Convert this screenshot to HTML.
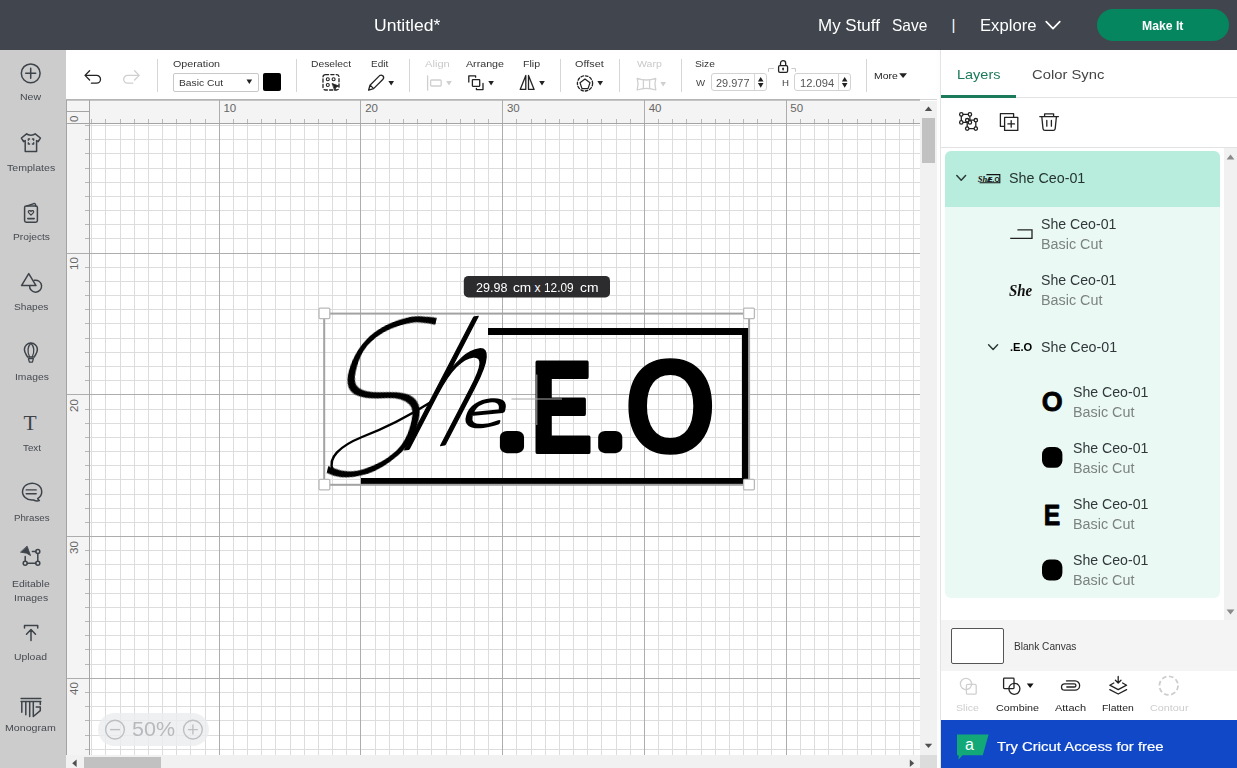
<!DOCTYPE html>
<html lang="en"><head><meta charset="utf-8"><title>Untitled* - Design Space</title>
<style>
html,body{margin:0;padding:0;}
body{width:1237px;height:768px;overflow:hidden;position:relative;background:#fff;font-family:"Liberation Sans",sans-serif;}
.a{position:absolute;}
.t{position:absolute;white-space:nowrap;line-height:1;font-family:"Liberation Sans",sans-serif;}
svg{position:absolute;overflow:visible;}
.ic{fill:none;stroke:#3d4349;stroke-width:1.5;stroke-linecap:round;stroke-linejoin:round;}
.tb{fill:none;stroke:#222;stroke-width:1.3;stroke-linecap:round;stroke-linejoin:round;}
.dis{stroke:#cfcfcf;}
.sep{position:absolute;top:59px;width:1px;height:33px;background:#d6d6d6;}
</style></head>
<body>
<div class="a" id="header" style="left:0;top:0;width:1237px;height:50px;background:#41464e;"></div>
<div class="a" id="sidebar" style="left:0;top:50px;width:66px;height:718px;background:#cccccc;"></div>
<div class="a" id="toolbar" style="left:66px;top:50px;width:874px;height:49px;background:#fff;"></div>
<div class="a" style="left:66px;top:99px;width:854px;height:1px;background:#b4b4b4;"></div><div class="a" style="left:920px;top:99px;width:17px;height:1px;background:#d4d4d4;"></div>
<div class="a" style="left:66px;top:100px;width:854px;height:1px;background:#c4c4c4;"></div>
<div class="a" id="rulers" style="left:66px;top:101px;width:854px;height:654px;background:#f4f4f4;"></div>
<div class="a" id="canvas" style="left:90px;top:124px;width:830px;height:631px;background:#fff;"></div>
<svg id="grid" style="left:0;top:0;" width="1237" height="768" viewBox="0 0 1237 768"><path d="M91.50 124V755M105.50 124V755M120.50 124V755M134.50 124V755M148.50 124V755M162.50 124V755M176.50 124V755M190.50 124V755M205.50 124V755M233.50 124V755M247.50 124V755M261.50 124V755M275.50 124V755M290.50 124V755M304.50 124V755M318.50 124V755M332.50 124V755M346.50 124V755M375.50 124V755M389.50 124V755M403.50 124V755M417.50 124V755M431.50 124V755M446.50 124V755M460.50 124V755M474.50 124V755M488.50 124V755M516.50 124V755M531.50 124V755M545.50 124V755M559.50 124V755M573.50 124V755M587.50 124V755M601.50 124V755M616.50 124V755M630.50 124V755M658.50 124V755M672.50 124V755M686.50 124V755M701.50 124V755M715.50 124V755M729.50 124V755M743.50 124V755M757.50 124V755M771.50 124V755M800.50 124V755M814.50 124V755M828.50 124V755M842.50 124V755M857.50 124V755M871.50 124V755M885.50 124V755M899.50 124V755M913.50 124V755M90 125.50H920M90 139.50H920M90 153.50H920M90 168.50H920M90 182.50H920M90 196.50H920M90 210.50H920M90 224.50H920M90 238.50H920M90 267.50H920M90 281.50H920M90 295.50H920M90 309.50H920M90 323.50H920M90 338.50H920M90 352.50H920M90 366.50H920M90 380.50H920M90 409.50H920M90 423.50H920M90 437.50H920M90 451.50H920M90 465.50H920M90 479.50H920M90 494.50H920M90 508.50H920M90 522.50H920M90 550.50H920M90 564.50H920M90 579.50H920M90 593.50H920M90 607.50H920M90 621.50H920M90 635.50H920M90 649.50H920M90 664.50H920M90 692.50H920M90 706.50H920M90 720.50H920M90 735.50H920M90 749.50H920" stroke="#dddddd" stroke-width="1" fill="none"/><path d="M91.50 119V124M105.50 119V124M120.50 119V124M134.50 119V124M148.50 119V124M162.50 119V124M176.50 119V124M190.50 119V124M205.50 119V124M233.50 119V124M247.50 119V124M261.50 119V124M275.50 119V124M290.50 119V124M304.50 119V124M318.50 119V124M332.50 119V124M346.50 119V124M375.50 119V124M389.50 119V124M403.50 119V124M417.50 119V124M431.50 119V124M446.50 119V124M460.50 119V124M474.50 119V124M488.50 119V124M516.50 119V124M531.50 119V124M545.50 119V124M559.50 119V124M573.50 119V124M587.50 119V124M601.50 119V124M616.50 119V124M630.50 119V124M658.50 119V124M672.50 119V124M686.50 119V124M701.50 119V124M715.50 119V124M729.50 119V124M743.50 119V124M757.50 119V124M771.50 119V124M800.50 119V124M814.50 119V124M828.50 119V124M842.50 119V124M857.50 119V124M871.50 119V124M885.50 119V124M899.50 119V124M913.50 119V124M85 125.50H90M85 139.50H90M85 153.50H90M85 168.50H90M85 182.50H90M85 196.50H90M85 210.50H90M85 224.50H90M85 238.50H90M85 267.50H90M85 281.50H90M85 295.50H90M85 309.50H90M85 323.50H90M85 338.50H90M85 352.50H90M85 366.50H90M85 380.50H90M85 409.50H90M85 423.50H90M85 437.50H90M85 451.50H90M85 465.50H90M85 479.50H90M85 494.50H90M85 508.50H90M85 522.50H90M85 550.50H90M85 564.50H90M85 579.50H90M85 593.50H90M85 607.50H90M85 621.50H90M85 635.50H90M85 649.50H90M85 664.50H90M85 692.50H90M85 706.50H90M85 720.50H90M85 735.50H90M85 749.50H90" stroke="#b8b8b8" stroke-width="1" fill="none"/><path d="M219.50 100V755M360.50 100V755M502.50 100V755M644.50 100V755M786.50 100V755M67 253.50H920M67 394.50H920M67 536.50H920M67 678.50H920" stroke="#adadad" stroke-width="1" fill="none"/><path d="M89.5 100V755M67 123.5H920" stroke="#a4a4a4" stroke-width="1" fill="none"/><path d="M67 111.5H89M66.5 100V755" stroke="#a4a4a4" stroke-width="1" fill="none"/></svg>
<span class="a" style="left:69px;top:270.1px;width:0;height:0;"><span style="position:absolute;left:0;top:0;transform-origin:0 0;transform:rotate(-90deg);white-space:nowrap;line-height:1;font-size:11.5px;color:#666;">10</span></span>
<span class="a" style="left:69px;top:411.9px;width:0;height:0;"><span style="position:absolute;left:0;top:0;transform-origin:0 0;transform:rotate(-90deg);white-space:nowrap;line-height:1;font-size:11.5px;color:#666;">20</span></span>
<span class="a" style="left:69px;top:553.6px;width:0;height:0;"><span style="position:absolute;left:0;top:0;transform-origin:0 0;transform:rotate(-90deg);white-space:nowrap;line-height:1;font-size:11.5px;color:#666;">30</span></span>
<span class="a" style="left:69px;top:695.3px;width:0;height:0;"><span style="position:absolute;left:0;top:0;transform-origin:0 0;transform:rotate(-90deg);white-space:nowrap;line-height:1;font-size:11.5px;color:#666;">40</span></span>
<span class="a" style="left:69px;top:121.5px;width:0;height:0;"><span style="position:absolute;left:0;top:0;transform-origin:0 0;transform:rotate(-90deg);white-space:nowrap;line-height:1;font-size:11.5px;color:#666;">0</span></span>
<svg style="left:1044px;top:18px" width="18" height="14" viewBox="0 0 18 14"><path d="M2.2 3.6L9 10.6L15.8 3.6" fill="none" stroke="#fff" stroke-width="1.7" stroke-linecap="round" stroke-linejoin="round"/></svg>
<div class="a" style="left:1097px;top:9px;width:132px;height:32px;border-radius:16px;background:#05865f;"></div>
<svg style="left:0;top:50px" width="66" height="718" viewBox="0 50 66 718"><g class="ic"><circle cx="30.7" cy="73.3" r="9.4"/><path d="M30.7 68.3V78.3M25.7 73.3H35.7"/></g><g class="ic"><path d="M26.6 133.8 C28 135.6 33.6 135.6 35.2 133.8 L40.4 138 L38.2 141.6 L36.6 140.6 V151.6 H25.2 V140.6 L23.6 141.6 L21.4 138 Z"/><path d="M28.3 140.3V139H29.6M32.4 139H33.7V140.3M33.7 142.7V144H32.4M29.6 144H28.3V142.7" stroke-width="1.3"/></g><g class="ic"><rect x="24.6" y="206" width="12.8" height="16.2" rx="1.6"/><path d="M27 206 L33.8 203.6 Q35.4 203.2 35.6 205 V206"/><path d="M31 215.2 L28.6 212.7 Q27.8 211.2 29.2 210.6 Q30.4 210.3 31 211.5 Q31.6 210.3 32.8 210.6 Q34.2 211.2 33.4 212.7 Z" stroke-width="1.2"/><path d="M27.8 218.6H34.2" stroke-width="1.6"/></g><g class="ic"><path d="M28.75 273.6 L36.0 285.6 H21.5 Z"/><path d="M29.6 285.8 A6 6 0 1 0 34.3 280.3"/></g><g class="ic"><path d="M27.6 357 C25.6 353.6 24.4 352.6 24.4 349.6 A6.5 6.5 0 0 1 37.4 349.6 C37.4 352.6 36.2 353.6 34.2 357 Z"/><path d="M29.6 357 C27.4 352 27.6 346.4 30.9 343.2 C34.2 346.4 34.4 352 32.2 357" stroke-width="1.2"/><path d="M28.4 358.6 L29.4 362.2 H32.4 L33.4 358.6 Z" stroke-width="1.3"/></g><g class="ic"><path d="M37.6 498.6 A9.6 8.4 0 1 0 33.6 500 Q36.4 501.6 39.4 500.6 Q38 499.8 37.6 498.6 Z"/><path d="M26.2 489.9H36.2M26.2 493.8H36.2" stroke-width="1.4"/></g><g class="ic" stroke-width="1.4"><path d="M32.4 551.4H35.8M37.8 553.4V561.3M35.8 563.3H27.2M25.2 561.3V556.4"/><circle cx="37.8" cy="551.4" r="2"/><circle cx="37.8" cy="563.3" r="2"/><circle cx="25.2" cy="563.3" r="2"/><path d="M27.2 546.4 L30.6 555.6 L26.6 553.2 L20.8 552.2 Z" fill="#3d4349" stroke-width="0.8"/></g><g class="ic" stroke-width="1.6"><path d="M24.5 628V625.6H37.7V628M31 640.4V629.8M26.5 634.2L31 629.6L35.5 634.2"/></g><g class="ic" stroke-width="1.3" stroke-linecap="butt"><path d="M21.1 698.6H40.8M21.1 701.6H40.8M21.8 701.6V712.2M25.8 701.6V714.7M29.7 701.6V716.5M33.3 701.6V716.5M40.3 701.6V704.4M36.2 706.9H40.3V710.6L33.3 716.5"/></g></svg>
<div class="sep" style="left:157px;"></div>
<div class="sep" style="left:295.5px;"></div>
<div class="sep" style="left:408.5px;"></div>
<div class="sep" style="left:559.5px;"></div>
<div class="sep" style="left:618.5px;"></div>
<div class="sep" style="left:680.5px;"></div>
<div class="sep" style="left:865.5px;"></div>
<svg style="left:66px;top:50px" width="874" height="50" viewBox="66 50 874 50"><g class="tb" stroke-width="1.5"><path d="M89.6 70.8L85 75.4L89.6 80M85.4 75.4H96.6A3.9 3.9 0 0 1 96.6 83.2H91.4"/></g><g class="tb dis" stroke-width="1.5"><path d="M134.6 70.8L139.2 75.4L134.6 80M138.8 75.4H127.6A3.9 3.9 0 0 0 127.6 83.2H132.8"/></g><g class="tb" stroke-width="1.3"><rect x="323" y="74.6" width="16" height="15.4" rx="2.4" stroke-dasharray="3.2 2.2"/><circle cx="327.8" cy="79.2" r="1.5" stroke-width="1.1"/><circle cx="333.6" cy="79.2" r="1.5" stroke-width="1.1"/><circle cx="327.8" cy="85" r="1.5" stroke-width="1.1"/><path d="M332.4 83.6L338.8 86L336 87.2L334.8 90Z" fill="#222" stroke-width="0.8"/></g><g class="tb" stroke-width="1.3"><path d="M379.6 75.6Q381.2 74.4 382.8 75.8Q384.4 77.4 383 79.2L373.6 88.6L368.6 90.2L370 85.2Z M370.4 85.4L373.4 88.4"/></g><path d="M388.4 81.1H394.0L391.2 85.5Z" fill="#222"/><g class="tb dis" stroke-width="1.3"><path d="M427.6 75.8V90.2"/><rect x="430.6" y="80" width="10.6" height="6" rx="1"/></g><path d="M446.2 81.1H451.8L449.0 85.5Z" fill="#cfcfcf"/><g class="tb" stroke-width="1.3"><path d="M468.8 82V75.8H475.6V77.2"/><rect x="472.4" y="79.6" width="7.3" height="6.7" rx="0.5"/><path d="M483 83.4V89.6H476.4V88.4"/></g><path d="M488.3 81.1H493.9L491.1 85.5Z" fill="#222"/><g class="tb" stroke-width="1.3"><path d="M525.8 75.4L520.2 89.4H525.8Z M528.5 75.4L534.1 89.4H528.5Z"/></g><path d="M539.2 81.1H544.8L542.0 85.5Z" fill="#222"/><g class="tb" stroke-width="1.3"><path d="M585 79L590 82.8L588 88.6H582L580 82.8Z" stroke-width="1.2"/><circle cx="585" cy="83.4" r="7.6" stroke-dasharray="2.6 1.9"/></g><path d="M597.4 81.1H603.0L600.2 85.5Z" fill="#222"/><g class="tb dis" stroke-width="1.3"><path d="M637.2 78.4Q646.4 81.6 655.8 78.4Q654 84.2 655.8 90Q646.4 86.8 637.2 90Q639 84.2 637.2 78.4ZM643.4 80.4V88M649.6 80.4V88"/></g><path d="M660.4 82.0H666.0L663.2 86.4Z" fill="#cfcfcf"/><g class="tb" stroke-width="1.4"><rect x="778.6" y="65.6" width="9" height="6.8" rx="1.3"/><path d="M780.5 65.4V63.2A2.6 2.6 0 0 1 785.7 63.2V65.4"/><path d="M783.1 68.2V69.8" stroke-width="1.6"/></g><path d="M768.5 71.8V68.5H774M791.4 68.5H795.5V71.8" fill="none" stroke="#c9c9c9" stroke-width="1"/><path d="M899.2 73.2L907 73.2L903.1 78Z" fill="#222"/></svg>
<div class="a" style="left:173px;top:73px;width:84px;height:17px;border:1px solid #c8c8c8;border-radius:2px;background:#fff;box-sizing:content-box;"></div>
<svg style="left:245px;top:78px" width="10" height="8" viewBox="0 0 10 8"><path d="M1.5 1.4H7.1L4.3 6Z" fill="#222"/></svg>
<div class="a" style="left:263px;top:73px;width:18px;height:18px;border-radius:2px;background:#000;"></div>
<div class="a" style="left:711px;top:73px;width:56px;height:18px;border:1px solid #d2d2d2;border-radius:3px;background:#fff;box-sizing:border-box;"></div>
<div class="a" style="left:754px;top:74px;width:1px;height:16px;background:#d8d8d8;"></div>
<svg style="left:755px;top:75px" width="10" height="15" viewBox="0 0 10 15"><path d="M2.9 6.4H8.5L5.7 2Z M2.9 8.1H8.5L5.7 12.8Z" fill="#222"/></svg>
<div class="a" style="left:794px;top:73px;width:57px;height:18px;border:1px solid #d2d2d2;border-radius:3px;background:#fff;box-sizing:border-box;"></div>
<div class="a" style="left:838px;top:74px;width:1px;height:16px;background:#d8d8d8;"></div>
<svg style="left:839px;top:75px" width="10" height="15" viewBox="0 0 10 15"><path d="M2.9 6.4H8.5L5.7 2Z M2.9 8.1H8.5L5.7 12.8Z" fill="#222"/></svg>
<div class="a" style="left:920px;top:101px;width:17px;height:654px;background:#f1f1f1;"></div>
<div class="a" style="left:922px;top:118px;width:13px;height:45px;background:#c1c1c1;"></div>
<div class="a" style="left:66px;top:755px;width:854px;height:13px;background:#f1f1f1;"></div>
<div class="a" style="left:84px;top:757px;width:77px;height:11px;background:#c1c1c1;"></div>
<div class="a" style="left:920px;top:755px;width:17px;height:13px;background:#dcdcdc;"></div>
<div class="a" style="left:937px;top:50px;width:3px;height:718px;background:#fdfdfd;"></div>
<svg style="left:0;top:0" width="1237" height="768" viewBox="0 0 1237 768"><path d="M924.8 110.9H932.2L928.5 106.6Z" fill="#505050"/><path d="M924.8 743.7H932.2L928.5 748Z" fill="#505050"/><path d="M76.6 759.4V767L72.2 763.2Z" fill="#505050"/><path d="M909.8 759.4V767L914.2 763.2Z" fill="#505050"/></svg>
<div class="a" style="left:98px;top:713px;width:111px;height:33px;border-radius:16.5px;background:rgba(236,237,238,0.82);"></div>
<svg style="left:98px;top:713px" width="111" height="33" viewBox="98 713 111 33"><g fill="none" stroke="#bdc0c3" stroke-width="1.4"><circle cx="115" cy="729.6" r="9.4"/><path d="M110 729.6H120"/><circle cx="192.9" cy="729.6" r="9.4"/><path d="M187.9 729.6H197.9M192.9 724.6V734.6"/></g></svg>
<div class="a" id="panel" style="left:940px;top:50px;width:297px;height:718px;background:#fff;border-left:1px solid #e3e3e3;box-sizing:border-box;"></div>
<div class="a" style="left:941px;top:97px;width:296px;height:1px;background:#e2e2e2;"></div>
<div class="a" style="left:941px;top:95px;width:75px;height:3px;background:#1a7a5a;"></div>
<div class="a" style="left:941px;top:147px;width:296px;height:1px;background:#e2e2e2;"></div>
<svg style="left:941px;top:98px" width="296" height="50" viewBox="941 98 296 50"><g class="tb" stroke-width="1.3"><rect x="961.3" y="114.4" width="8.6" height="8.0"/><rect x="967.2" y="120.2" width="8.6" height="8.4"/><circle cx="961.3" cy="114.4" r="1.7" fill="#fff"/><circle cx="969.9" cy="114.4" r="1.7" fill="#fff"/><circle cx="961.3" cy="122.4" r="1.7" fill="#fff"/><circle cx="975.8" cy="120.2" r="1.7" fill="#fff"/><circle cx="967.2" cy="128.6" r="1.7" fill="#fff"/><circle cx="975.8" cy="128.6" r="1.7" fill="#fff"/><circle cx="969.9" cy="122.4" r="1.7" fill="#fff"/><circle cx="967.2" cy="120.2" r="1.7" fill="#fff"/><path d="M1004.4 126.4H1000.4V113.6H1013.6V117.2"/><rect x="1004.6" y="117.4" width="13.2" height="13" /><path d="M1011.2 120.6V127.2M1007.9 123.9H1014.5"/><path d="M1039.8 116.6H1058.4M1044.6 116.4V113.8H1053.6V116.4M1041.8 116.8L1043 128.6Q1043.2 130.4 1045 130.4H1053.2Q1055 130.4 1055.2 128.6L1056.4 116.8M1046.8 120.4V126.2M1051.4 120.4V126.2"/></g></svg>
<div class="a" style="left:945px;top:151px;width:275px;height:447px;border-radius:6px;background:#eaf9f4;"></div>
<div class="a" style="left:945px;top:151px;width:275px;height:56px;border-radius:6px 6px 0 0;background:#b8ecdd;"></div>
<div class="a" style="left:1224px;top:148px;width:13px;height:472px;background:#f1f1f1;"></div>
<svg style="left:1224px;top:148px" width="13" height="472" viewBox="1224 148 13 472"><path d="M1226.6 159.4L1234.4 159.4L1230.5 154.6Z M1226.6 609.6L1234.4 609.6L1230.5 614.4Z" fill="#8a8a8a"/></svg>
<svg style="left:941px;top:148px" width="283" height="472" viewBox="941 148 283 472"><g fill="none" stroke="#2c3a36" stroke-width="1.5" stroke-linecap="round" stroke-linejoin="round"><path d="M956.8 175.6L961.2 180.2L965.6 175.6"/><path d="M988.6 344.8L993.1 349.4L997.6 344.8"/></g><path d="M1017.4 229.8H1032V238.4H1010.2" fill="none" stroke="#222" stroke-width="1.3"/><rect x="1042" y="447" width="20.4" height="20.8" rx="7.4" fill="#000"/><rect x="1042" y="559.6" width="20.4" height="20.8" rx="7.4" fill="#000"/><path d="M986.4 174.6H999.8V182.8H979.6" fill="none" stroke="#111" stroke-width="1.1"/></svg>
<div class="a" style="left:941px;top:620px;width:296px;height:51px;background:#f4f4f4;"></div>
<div class="a" style="left:951px;top:628px;width:51px;height:34px;border:1px solid #555;border-radius:2px;background:#fff;"></div>
<svg style="left:941px;top:671px" width="296" height="49" viewBox="941 671 296 49"><g class="tb dis" stroke-width="1.7"><circle cx="966" cy="684" r="5.6"/><rect x="966.4" y="684.4" width="9.8" height="9.8" rx="1.2"/></g><g class="tb" stroke-width="1.8"><rect x="1003.6" y="678.2" width="10.4" height="10.4" rx="0.8"/><circle cx="1014.4" cy="688.8" r="5.5"/></g><path d="M1026.8 683.6H1033.6L1030.2 688Z" fill="#111"/><g class="tb" stroke-width="1.8"><path d="M1066.5 680.9H1075A4.65 4.65 0 0 1 1075 690.2H1064.7A3.2 3.2 0 0 1 1064.7 683.8H1074.3A1.6 1.6 0 0 1 1074.3 687H1066.8"/></g><g class="tb" stroke-width="1.8"><path d="M1118.2 676.4V682.2M1115.4 680.2L1118.2 683L1121 680.2M1113.8 683L1109.8 685.2L1118.2 689.6L1126.6 685.2L1122.6 683M1109.8 689.6L1118.2 694L1126.6 689.6"/></g><circle cx="1168.7" cy="685.6" r="9.3" fill="none" stroke="#cdcdcd" stroke-width="1.8" stroke-dasharray="4.7 2.6"/></svg>
<div class="a" style="left:941px;top:720px;width:296px;height:48px;background:#1148c7;"></div>
<svg style="left:941px;top:720px" width="296" height="48" viewBox="941 720 296 48"><path d="M957 734.4H988.6L982.8 755.2H962.6L958.6 759.4V755.2H957Z" fill="#12a878"/></svg>
<svg id="design" style="left:0;top:0" width="1237" height="768" viewBox="0 0 1237 768"><path d="M488 331.6H745.4V481.4H361" fill="none" stroke="#000" stroke-width="7" stroke-linejoin="miter"/><text transform="matrix(0.7376 0 -0.0000 0.6577 501.78 446.80)" font-size="100" font-family="Liberation Sans, sans-serif" font-weight="700" fill="#000" stroke="#000" stroke-width="18.634" stroke-linejoin="round">.</text><text transform="matrix(0.9287 0 -0.0000 1.2907 530.63 451.55)" font-size="100" font-family="Liberation Sans, sans-serif" font-weight="700" fill="#000" stroke="#000" stroke-width="3.154" stroke-linejoin="round">E</text><text transform="matrix(0.7376 0 -0.0000 0.6577 600.08 446.80)" font-size="100" font-family="Liberation Sans, sans-serif" font-weight="700" fill="#000" stroke="#000" stroke-width="18.634" stroke-linejoin="round">.</text><text transform="matrix(1.1842 0 -0.0000 1.3305 624.19 452.82)" font-size="100" font-family="Liberation Sans, sans-serif" font-weight="700" fill="#000" stroke="#000" stroke-width="1.193" stroke-linejoin="round">O</text><filter id="thin" x="-10%" y="-10%" width="120%" height="120%"><feMorphology operator="erode" radius="0.55"/></filter><text filter="url(#thin)" transform="matrix(0.9144 -0.2743 -0.2200 1 305.82 490.58)" font-size="207.66" font-family="DejaVu Sans Light, DejaVu Sans, sans-serif" font-weight="200" fill="#000">S</text><text transform="matrix(0.5636 -0.0676 -0.5200 1 393.95 450.60)" font-size="173.04" font-family="DejaVu Sans Light, DejaVu Sans, sans-serif" font-weight="200" fill="#000" stroke="#000" stroke-width="2.60" stroke-linejoin="round">h</text><text transform="matrix(1.5936 -0.1594 -0.3000 1 457.94 428.64)" font-size="47.95" font-family="DejaVu Sans Light, DejaVu Sans, sans-serif" font-weight="200" fill="#000" stroke="#000" stroke-width="2.20" stroke-linejoin="round">e</text><path d="M333 470C327 458 340 446 362 437C388 427 412 414 431 402" fill="none" stroke="#000" stroke-width="2.4" stroke-linecap="round"/><text transform="matrix(0.2691 0 -0.0000 0.2782 1041.80 411.32)" font-size="100" font-family="Liberation Sans, sans-serif" font-weight="700" fill="#000" stroke="#000" stroke-width="2.923" stroke-linejoin="round">O</text><text transform="matrix(0.2478 0 -0.0000 0.2994 1043.74 524.60)" font-size="100" font-family="Liberation Sans, sans-serif" font-weight="700" fill="#000" stroke="#000" stroke-width="2.924" stroke-linejoin="round">E</text><rect x="324.2" y="313.6" width="424.9" height="171.2" fill="none" stroke="#a2a2a2" stroke-width="2"/><path d="M511.5 399H562M536.8 374.5V425" fill="none" stroke="#a9a9a9" stroke-width="1"/><rect x="319.0" y="308.2" width="10.8" height="10.4" rx="1" fill="#fff" stroke="#b9b9b9" stroke-width="1.3"/><rect x="743.6" y="308.2" width="10.8" height="10.4" rx="1" fill="#fff" stroke="#b9b9b9" stroke-width="1.3"/><rect x="319.0" y="479.4" width="10.8" height="10.4" rx="1" fill="#fff" stroke="#b9b9b9" stroke-width="1.3"/><rect x="743.6" y="479.4" width="10.8" height="10.4" rx="1" fill="#fff" stroke="#b9b9b9" stroke-width="1.3"/><rect x="463.8" y="276" width="146.2" height="21.4" rx="4.5" fill="#2c2c2f"/></svg>
<span class="t" id="t0" style="left:223.43px;top:103px;font-size:11.5px;color:#666;font-weight:400;transform-origin:0 0;transform:scaleX(1.0000);">10</span>
<span class="t" id="t1" style="left:365.16px;top:103px;font-size:11.5px;color:#666;font-weight:400;transform-origin:0 0;transform:scaleX(1.0000);">20</span>
<span class="t" id="t2" style="left:506.90px;top:103px;font-size:11.5px;color:#666;font-weight:400;transform-origin:0 0;transform:scaleX(1.0000);">30</span>
<span class="t" id="t3" style="left:648.63px;top:103px;font-size:11.5px;color:#666;font-weight:400;transform-origin:0 0;transform:scaleX(1.0000);">40</span>
<span class="t" id="t4" style="left:790.36px;top:103px;font-size:11.5px;color:#666;font-weight:400;transform-origin:0 0;transform:scaleX(1.0000);">50</span>
<span class="t" id="t5" style="left:374.00px;top:17px;font-size:16.5px;color:#fff;font-weight:400;transform-origin:0 0;transform:scaleX(1.0645);">Untitled*</span>
<span class="t" id="t6" style="left:818.00px;top:17px;font-size:16.5px;color:#fff;font-weight:400;transform-origin:0 0;transform:scaleX(1.0279);">My Stuff</span>
<span class="t" id="t7" style="left:892.20px;top:17px;font-size:16.5px;color:#fff;font-weight:400;transform-origin:0 0;transform:scaleX(0.9413);">Save</span>
<span class="t" id="t8" style="left:951.40px;top:17px;font-size:15px;color:#fff;font-weight:400;transform-origin:0 0;transform:scaleX(1.0000);">|</span>
<span class="t" id="t9" style="left:979.60px;top:17px;font-size:16.5px;color:#fff;font-weight:400;transform-origin:0 0;transform:scaleX(1.0098);">Explore</span>
<span class="t" id="t10" style="left:1142.40px;top:20px;font-size:12px;color:#fff;font-weight:700;transform-origin:0 0;transform:scaleX(1.0175);">Make It</span>
<span class="t" id="t11" style="left:20.40px;top:93px;font-size:8.8px;color:#454a50;font-weight:400;transform-origin:0 0;transform:scaleX(1.1982);">New</span>
<span class="t" id="t12" style="left:6.90px;top:164px;font-size:8.8px;color:#454a50;font-weight:400;transform-origin:0 0;transform:scaleX(1.2022);">Templates</span>
<span class="t" id="t13" style="left:12.60px;top:233px;font-size:8.8px;color:#454a50;font-weight:400;transform-origin:0 0;transform:scaleX(1.1642);">Projects</span>
<span class="t" id="t14" style="left:13.90px;top:303px;font-size:8.8px;color:#454a50;font-weight:400;transform-origin:0 0;transform:scaleX(1.1527);">Shapes</span>
<span class="t" id="t15" style="left:14.50px;top:373px;font-size:8.8px;color:#454a50;font-weight:400;transform-origin:0 0;transform:scaleX(1.1712);">Images</span>
<span class="t" id="t16" style="left:22.50px;top:444px;font-size:8.8px;color:#454a50;font-weight:400;transform-origin:0 0;transform:scaleX(1.1090);">Text</span>
<span class="t" id="t17" style="left:13.50px;top:514px;font-size:8.8px;color:#454a50;font-weight:400;transform-origin:0 0;transform:scaleX(1.1028);">Phrases</span>
<span class="t" id="t18" style="left:12.20px;top:580px;font-size:8.8px;color:#454a50;font-weight:400;transform-origin:0 0;transform:scaleX(1.1857);">Editable</span>
<span class="t" id="t19" style="left:14.10px;top:594px;font-size:8.8px;color:#454a50;font-weight:400;transform-origin:0 0;transform:scaleX(1.1816);">Images</span>
<span class="t" id="t20" style="left:14.40px;top:653px;font-size:8.8px;color:#454a50;font-weight:400;transform-origin:0 0;transform:scaleX(1.1832);">Upload</span>
<span class="t" id="t21" style="left:5.40px;top:724px;font-size:8.8px;color:#454a50;font-weight:400;transform-origin:0 0;transform:scaleX(1.2077);">Monogram</span>
<span class="t" id="t22" style="left:23.50px;top:413px;font-size:21.5px;color:#3d4349;font-weight:400;transform-origin:0 0;transform:scaleX(1.0000);font-family:'Liberation Serif',serif;">T</span>
<span class="t" id="t23" style="left:173.20px;top:60px;font-size:9.3px;color:#333;font-weight:400;transform-origin:0 0;transform:scaleX(1.1532);">Operation</span>
<span class="t" id="t24" style="left:311.20px;top:60px;font-size:9.3px;color:#333;font-weight:400;transform-origin:0 0;transform:scaleX(1.1086);">Deselect</span>
<span class="t" id="t25" style="left:371.20px;top:60px;font-size:9.3px;color:#333;font-weight:400;transform-origin:0 0;transform:scaleX(1.0729);">Edit</span>
<span class="t" id="t26" style="left:425.30px;top:60px;font-size:9.3px;color:#c9c9c9;font-weight:400;transform-origin:0 0;transform:scaleX(1.1988);">Align</span>
<span class="t" id="t27" style="left:465.60px;top:60px;font-size:9.3px;color:#333;font-weight:400;transform-origin:0 0;transform:scaleX(1.1488);">Arrange</span>
<span class="t" id="t28" style="left:522.60px;top:60px;font-size:9.3px;color:#333;font-weight:400;transform-origin:0 0;transform:scaleX(1.1412);">Flip</span>
<span class="t" id="t29" style="left:574.90px;top:60px;font-size:9.3px;color:#333;font-weight:400;transform-origin:0 0;transform:scaleX(1.1647);">Offset</span>
<span class="t" id="t30" style="left:637.30px;top:60px;font-size:9.3px;color:#c9c9c9;font-weight:400;transform-origin:0 0;transform:scaleX(1.1337);">Warp</span>
<span class="t" id="t31" style="left:695.40px;top:60px;font-size:9.3px;color:#333;font-weight:400;transform-origin:0 0;transform:scaleX(1.0943);">Size</span>
<span class="t" id="t32" style="left:873.60px;top:71px;font-size:9.8px;color:#222;font-weight:400;transform-origin:0 0;transform:scaleX(1.0659);">More</span>
<span class="t" id="t33" style="left:179.20px;top:78px;font-size:9.5px;color:#333;font-weight:400;transform-origin:0 0;transform:scaleX(1.0822);">Basic Cut</span>
<span class="t" id="t34" style="left:695.80px;top:78px;font-size:9.4px;color:#444;font-weight:400;transform-origin:0 0;transform:scaleX(1.0272);">W</span>
<span class="t" id="t35" style="left:715.50px;top:78px;font-size:11.2px;color:#555;font-weight:400;transform-origin:0 0;transform:scaleX(0.9790);">29.977</span>
<span class="t" id="t36" style="left:782.00px;top:78px;font-size:9.4px;color:#444;font-weight:400;transform-origin:0 0;transform:scaleX(1.0323);">H</span>
<span class="t" id="t37" style="left:799.50px;top:78px;font-size:11.2px;color:#555;font-weight:400;transform-origin:0 0;transform:scaleX(0.9995);">12.094</span>
<span class="t" id="t38" style="left:132.40px;top:720px;font-size:19.5px;color:#b7babd;font-weight:400;transform-origin:0 0;transform:scaleX(1.1017);">50%</span>
<span class="t" id="t39" style="left:956.90px;top:68px;font-size:13.6px;color:#1a7a5a;font-weight:400;transform-origin:0 0;transform:scaleX(1.0658);">Layers</span>
<span class="t" id="t40" style="left:1032.40px;top:68px;font-size:13.6px;color:#454545;font-weight:400;transform-origin:0 0;transform:scaleX(1.0875);">Color Sync</span>
<span class="t" id="t41" style="left:1009.10px;top:171px;font-size:14px;color:#24342f;font-weight:400;transform-origin:0 0;transform:scaleX(1.0212);">She Ceo-01</span>
<span class="t" id="t42" style="left:1041.00px;top:217px;font-size:14px;color:#30383a;font-weight:400;transform-origin:0 0;transform:scaleX(1.0091);">She Ceo-01</span>
<span class="t" id="t43" style="left:1041.00px;top:237px;font-size:14px;color:#7c8280;font-weight:400;transform-origin:0 0;transform:scaleX(1.0247);">Basic Cut</span>
<span class="t" id="t44" style="left:1041.00px;top:273px;font-size:14px;color:#30383a;font-weight:400;transform-origin:0 0;transform:scaleX(1.0091);">She Ceo-01</span>
<span class="t" id="t45" style="left:1041.00px;top:293px;font-size:14px;color:#7c8280;font-weight:400;transform-origin:0 0;transform:scaleX(1.0247);">Basic Cut</span>
<span class="t" id="t46" style="left:1040.90px;top:340px;font-size:14px;color:#30383a;font-weight:400;transform-origin:0 0;transform:scaleX(1.0198);">She Ceo-01</span>
<span class="t" id="t47" style="left:1073.00px;top:385px;font-size:14px;color:#30383a;font-weight:400;transform-origin:0 0;transform:scaleX(1.0091);">She Ceo-01</span>
<span class="t" id="t48" style="left:1073.00px;top:405px;font-size:14px;color:#7c8280;font-weight:400;transform-origin:0 0;transform:scaleX(1.0247);">Basic Cut</span>
<span class="t" id="t49" style="left:1073.00px;top:441px;font-size:14px;color:#30383a;font-weight:400;transform-origin:0 0;transform:scaleX(1.0091);">She Ceo-01</span>
<span class="t" id="t50" style="left:1073.00px;top:461px;font-size:14px;color:#7c8280;font-weight:400;transform-origin:0 0;transform:scaleX(1.0247);">Basic Cut</span>
<span class="t" id="t51" style="left:1073.00px;top:497px;font-size:14px;color:#30383a;font-weight:400;transform-origin:0 0;transform:scaleX(1.0091);">She Ceo-01</span>
<span class="t" id="t52" style="left:1073.00px;top:517px;font-size:14px;color:#7c8280;font-weight:400;transform-origin:0 0;transform:scaleX(1.0247);">Basic Cut</span>
<span class="t" id="t53" style="left:1073.00px;top:553px;font-size:14px;color:#30383a;font-weight:400;transform-origin:0 0;transform:scaleX(1.0091);">She Ceo-01</span>
<span class="t" id="t54" style="left:1073.00px;top:573px;font-size:14px;color:#7c8280;font-weight:400;transform-origin:0 0;transform:scaleX(1.0247);">Basic Cut</span>
<span class="t" id="t55" style="left:977.80px;top:175px;font-size:8.5px;color:#111;font-weight:400;transform-origin:0 0;transform:scaleX(1.0000);font-family:'Liberation Serif',serif;font-style:italic;font-weight:700;">She</span>
<span class="t" id="t56" style="left:986.40px;top:177px;font-size:6.6px;color:#111;font-weight:700;transform-origin:0 0;transform:scaleX(1.0000);">.E.O</span>
<span class="t" id="t57" style="left:1009.10px;top:282px;font-size:17px;color:#111;font-weight:400;transform-origin:0 0;transform:scaleX(0.8765);font-family:'Liberation Serif',serif;font-style:italic;font-weight:700;">She</span>
<span class="t" id="t58" style="left:1009.90px;top:342px;font-size:11.4px;color:#000;font-weight:700;transform-origin:0 0;transform:scaleX(0.9782);">.E.O</span>
<span class="t" id="t59" style="left:1014.00px;top:642px;font-size:10px;color:#333;font-weight:400;transform-origin:0 0;transform:scaleX(1.0113);">Blank Canvas</span>
<span class="t" id="t60" style="left:956.40px;top:703px;font-size:9.5px;color:#cdcdcd;font-weight:400;transform-origin:0 0;transform:scaleX(1.1168);">Slice</span>
<span class="t" id="t61" style="left:996.10px;top:703px;font-size:9.5px;color:#222;font-weight:400;transform-origin:0 0;transform:scaleX(1.1306);">Combine</span>
<span class="t" id="t62" style="left:1054.90px;top:703px;font-size:9.5px;color:#222;font-weight:400;transform-origin:0 0;transform:scaleX(1.1545);">Attach</span>
<span class="t" id="t63" style="left:1102.10px;top:703px;font-size:9.5px;color:#222;font-weight:400;transform-origin:0 0;transform:scaleX(1.0948);">Flatten</span>
<span class="t" id="t64" style="left:1149.90px;top:703px;font-size:9.5px;color:#cdcdcd;font-weight:400;transform-origin:0 0;transform:scaleX(1.1386);">Contour</span>
<span class="t" id="t65" style="left:965.00px;top:737px;font-size:16px;color:#fff;font-weight:400;transform-origin:0 0;transform:scaleX(1.0000);">a</span>
<span class="t" id="t66" style="left:997.10px;top:740px;font-size:13.6px;color:#fff;font-weight:400;transform-origin:0 0;transform:scaleX(1.0954);-webkit-text-stroke:0.2px #fff;">Try Cricut Access for free</span>
<span class="t" id="t67" style="left:475.80px;top:282px;font-size:12px;color:#fff;font-weight:400;transform-origin:0 0;transform:scaleX(1.0456);">29.98</span>
<span class="t" id="t68" style="left:513.20px;top:282px;font-size:12px;color:#fff;font-weight:400;transform-origin:0 0;transform:scaleX(1.1375);">cm</span>
<span class="t" id="t69" style="left:534.60px;top:282px;font-size:12px;color:#fff;font-weight:400;transform-origin:0 0;transform:scaleX(1.0000);">x</span>
<span class="t" id="t70" style="left:544.20px;top:282px;font-size:12px;color:#fff;font-weight:400;transform-origin:0 0;transform:scaleX(0.9856);">12.09</span>
<span class="t" id="t71" style="left:579.60px;top:282px;font-size:12px;color:#fff;font-weight:400;transform-origin:0 0;transform:scaleX(1.1563);">cm</span>
</body></html>
